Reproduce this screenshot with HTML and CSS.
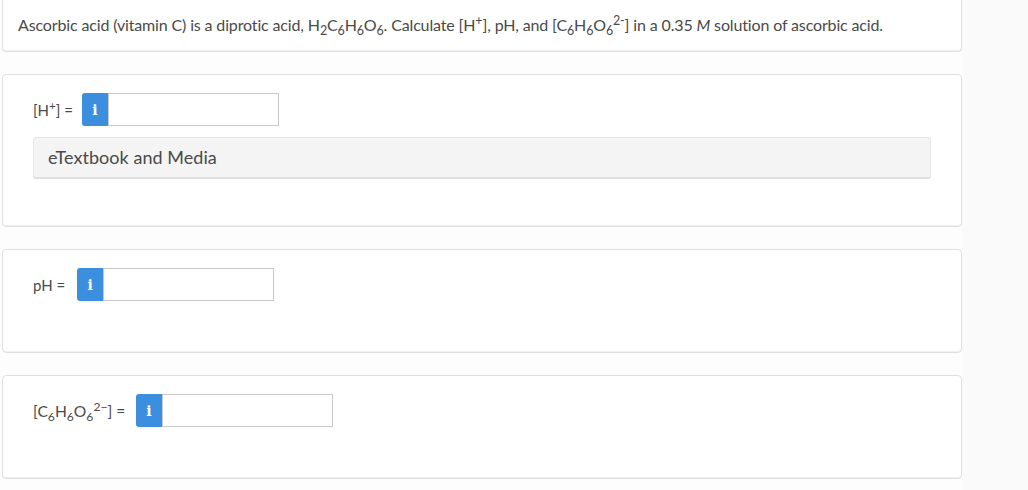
FILE: index.html
```html
<!DOCTYPE html>
<html lang="en">
<head>
  <meta charset="UTF-8" />
  <meta name="viewport" content="width=device-width, initial-scale=1.0" />
  <title>Ascorbic acid question</title>
  <link rel="stylesheet" href="styles.css">
</head>
<body>
  <div class="page">
    <div class="column">
      <div class="card question">
        <p>Ascorbic acid (vitamin C) is a diprotic acid, H<sub>2</sub>C<sub>6</sub>H<sub>6</sub>O<sub>6</sub>. Calculate [H<sup>+</sup>], pH, and [C<sub>6</sub>H<sub>6</sub>O<sub>6</sub><sup>2-</sup>] in a 0.35 <i>M</i> solution of ascorbic acid.</p>
      </div>

      <div class="card part part-first">
        <div class="answer">
          <span class="label">[H<sup>+</sup>] =</span>
          <button class="info">i</button>
          <input class="field" type="text" />
        </div>
        <div class="media">eTextbook and Media</div>
      </div>

      <div class="card part">
        <div class="answer">
          <span class="label label-ph">pH =</span>
          <button class="info">i</button>
          <input class="field" type="text" />
        </div>
      </div>

      <div class="card part">
        <div class="answer">
          <span class="label label-ion">[C<sub>6</sub>H<sub>6</sub>O<sub>6</sub><sup>2&minus;</sup>] =</span>
          <button class="info">i</button>
          <input class="field" type="text" />
        </div>
      </div>
    </div>
  </div>
</body>
</html>
```

FILE: styles.css
```css
html, body {
  margin: 0;
  height: 100%;
  overflow: hidden;
}
body {
  font-family: Lato, Arial, sans-serif;
  color: #4a4a4a;
  background: #fafafa;
}
.page {
  width: 962px;
  height: 490px;
  background: #fdfdfd;
  padding-left: 2px;
  box-sizing: border-box;
}
.column {
  display: flex;
  flex-direction: column;
  gap: 22px;
}
.card {
  background: #fff;
  border: 1px solid #e0e0e0;
  box-shadow: inset 0 -1px 0 #f0f0f0;
  border-radius: 4px;
  box-sizing: border-box;
}
.question {
  height: 52px;
  border-top: none;
  border-radius: 0 0 4px 4px;
  padding: 16px 15px 0;
}
.question p {
  margin: 0;
  font-size: 16px;
  line-height: 18px;
  letter-spacing: -0.145px;
  white-space: nowrap;
}
sub, sup {
  font-size: 78%;
  line-height: 0;
}
.part {
  height: 104px;
  padding: 18px 30px 0;
}
.part-first {
  height: 153px;
}
.answer {
  display: flex;
  align-items: center;
  height: 33px;
}
.label {
  font-size: 15px;
  margin-right: 9px;
}
.label-ph {
  margin-right: 12px;
}
.label-ion {
  font-size: 15.6px;
  margin-right: 10.5px;
}
.info {
  width: 26px;
  height: 33px;
  padding: 0;
  border: none;
  border-radius: 3px 0 0 3px;
  background: #3b8fde;
  color: #fff;
  font-family: "DejaVu Serif", serif;
  font-weight: bold;
  font-size: 14px;
}
.field {
  width: 171px;
  height: 33px;
  box-sizing: border-box;
  border: 1px solid #c8c8c8;
  background: #fff;
  padding: 0;
}
.media {
  margin-top: 11px;
  width: 898px;
  height: 42px;
  box-sizing: border-box;
  background: #f4f4f4;
  border: 1px solid #e6e6e6;
  border-bottom: 2px solid #dedede;
  border-radius: 3px;
  padding-left: 14px;
  font-size: 18px;
  line-height: 39px;
  letter-spacing: 0.05px;
}
```
